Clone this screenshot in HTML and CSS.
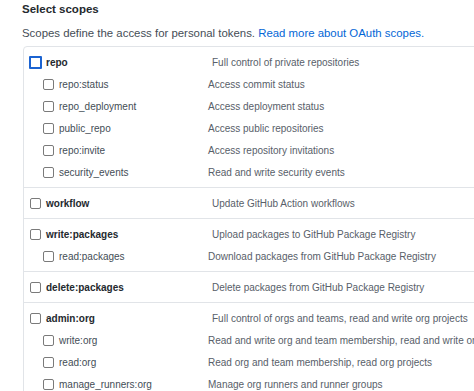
FILE: index.html
```html
<!DOCTYPE html>
<html>
<head>
<meta charset="utf-8">
<link rel="stylesheet" href="styles.css">
</head>
<body>
<div class="page">
  <h3 class="title">Select scopes</h3>
  <p class="lead">Scopes define the access for personal tokens. <a href="#" class="link">Read more about OAuth scopes.</a></p>
  <div class="scopes">
    <ul class="group">
      <li class="row top"><span class="cb focus"></span><span class="name">repo</span><span class="desc">Full control of private repositories</span></li>
      <li class="row sub"><span class="cb"></span><span class="name">repo:status</span><span class="desc">Access commit status</span></li>
      <li class="row sub"><span class="cb"></span><span class="name">repo_deployment</span><span class="desc">Access deployment status</span></li>
      <li class="row sub"><span class="cb"></span><span class="name">public_repo</span><span class="desc">Access public repositories</span></li>
      <li class="row sub"><span class="cb"></span><span class="name">repo:invite</span><span class="desc">Access repository invitations</span></li>
      <li class="row sub"><span class="cb"></span><span class="name">security_events</span><span class="desc">Read and write security events</span></li>
    </ul>
    <ul class="group">
      <li class="row top"><span class="cb"></span><span class="name">workflow</span><span class="desc">Update GitHub Action workflows</span></li>
    </ul>
    <ul class="group">
      <li class="row top"><span class="cb"></span><span class="name">write:packages</span><span class="desc">Upload packages to GitHub Package Registry</span></li>
      <li class="row sub"><span class="cb"></span><span class="name">read:packages</span><span class="desc">Download packages from GitHub Package Registry</span></li>
    </ul>
    <ul class="group">
      <li class="row top"><span class="cb"></span><span class="name">delete:packages</span><span class="desc">Delete packages from GitHub Package Registry</span></li>
    </ul>
    <ul class="group">
      <li class="row top"><span class="cb"></span><span class="name">admin:org</span><span class="desc">Full control of orgs and teams, read and write org projects</span></li>
      <li class="row sub"><span class="cb"></span><span class="name">write:org</span><span class="desc">Read and write org and team membership, read and write org projects</span></li>
      <li class="row sub"><span class="cb"></span><span class="name">read:org</span><span class="desc">Read org and team membership, read org projects</span></li>
      <li class="row sub"><span class="cb"></span><span class="name">manage_runners:org</span><span class="desc">Manage org runners and runner groups</span></li>
    </ul>
  </div>
</div>
</body>
</html>
```

FILE: styles.css
```css
html, body {
  margin: 0;
  padding: 0;
  overflow: hidden;
  background: #ffffff;
}
.page {
  padding-left: 22px;
  font-family: "Liberation Sans", Arial, sans-serif;
  color: #24292e;
}
.title {
  margin: 0;
  padding-top: 1px;
  font-size: 11.5px;
  line-height: 16px;
  font-weight: bold;
}
.lead {
  margin: 7px 0 0;
  font-size: 11.4px;
  line-height: 18px;
  color: #444d56;
}
.link {
  color: #0366d6;
  text-decoration: none;
}
.scopes {
  margin-top: 4px;
  margin-left: 1px;
  width: 520px;
  border: 1px solid #e1e4e8;
  border-radius: 4px;
}
.group {
  list-style: none;
  margin: 0;
  padding: 4px 0;
  border-top: 1px solid #e1e4e8;
}
.group:first-child {
  border-top: none;
}
.row {
  display: flex;
  align-items: center;
  height: 22px;
  font-size: 10px;
  white-space: nowrap;
}
.cb {
  flex: none;
  box-sizing: border-box;
  width: 11px;
  height: 11px;
  border: 1px solid #7a7a7a;
  border-radius: 2px;
  background: #fff;
}
.cb.focus {
  width: 13px;
  height: 13px;
  margin-left: -1px;
  margin-right: -1px;
  border: 2px solid #1b63d1;
  border-radius: 1px;
}
.name {
  margin-left: 5px;
}
.top {
  padding-left: 6px;
}
.top .name {
  width: 166px;
  font-weight: bold;
  color: #24292e;
}
.sub {
  padding-left: 19px;
}
.sub .name {
  width: 149px;
  color: #444d56;
}
.desc {
  color: #586069;
}
```
